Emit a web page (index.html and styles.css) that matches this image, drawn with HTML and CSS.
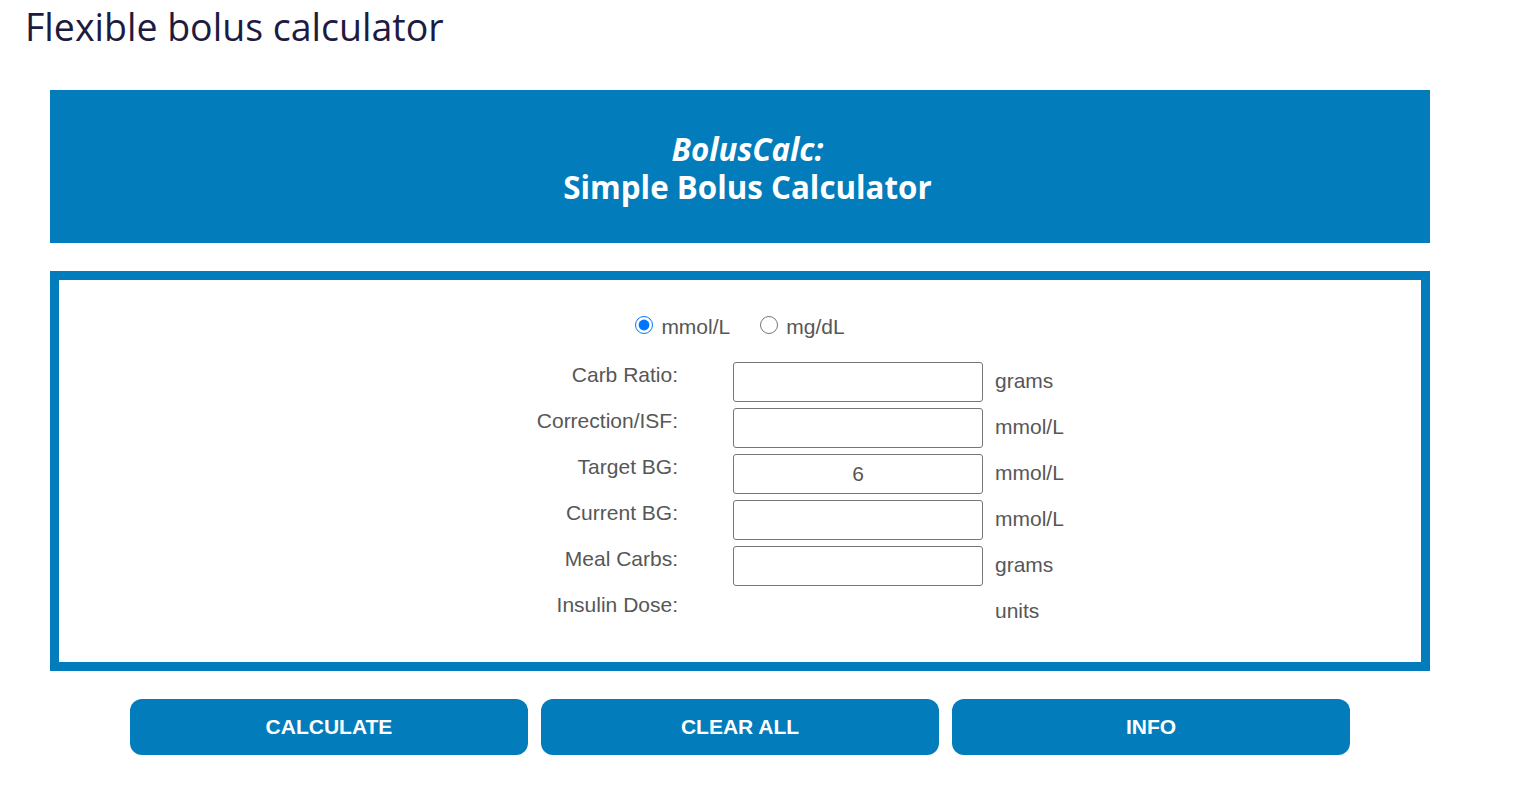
FILE: index.html
```html
<!DOCTYPE html>
<html lang="en">
<head>
<meta charset="utf-8">
<title>Flexible bolus calculator</title>
<link rel="stylesheet" href="styles.css">
</head>
<body>
<h1 class="title">Flexible bolus calculator</h1>
<main class="main">
  <header class="banner">
    <div class="banner-line banner-italic">BolusCalc:</div>
    <div class="banner-line">Simple Bolus Calculator</div>
  </header>
  <section class="panel">
    <div class="units-choice">
      <label class="radio-label"><input class="radio" type="radio" name="unit" checked>mmol/L</label>
      <label class="radio-label"><input class="radio" type="radio" name="unit">mg/dL</label>
    </div>
    <div class="form">
      <div class="lbl">Carb Ratio:</div><input class="field" type="text"><div class="unit">grams</div>
      <div class="lbl">Correction/ISF:</div><input class="field" type="text"><div class="unit">mmol/L</div>
      <div class="lbl">Target BG:</div><input class="field" type="text" value="6"><div class="unit">mmol/L</div>
      <div class="lbl">Current BG:</div><input class="field" type="text"><div class="unit">mmol/L</div>
      <div class="lbl">Meal Carbs:</div><input class="field" type="text"><div class="unit">grams</div>
      <div class="lbl">Insulin Dose:</div><div class="result"></div><div class="unit">units</div>
    </div>
  </section>
  <div class="buttons">
    <button class="btn" type="button">CALCULATE</button>
    <button class="btn" type="button">CLEAR ALL</button>
    <button class="btn" type="button">INFO</button>
  </div>
</main>
</body>
</html>
```
FILE: styles.css
```css
html, body {
  margin: 0;
  padding: 0;
  background: #ffffff;
}
body {
  width: 1536px;
  font-family: "Liberation Sans", Arial, sans-serif;
}
.title {
  margin: 0;
  padding: 2px 0 0 25px;
  height: 90px;
  box-sizing: border-box;
  font-family: "Open Sans", "Noto Sans", sans-serif;
  font-weight: 400;
  font-size: 37.5px;
  line-height: 50px;
  color: #1d1b40;
}
.main {
  width: 1380px;
  margin-left: 50px;
}
.banner {
  height: 153px;
  background: #027cbb;
  color: #ffffff;
  display: flex;
  flex-direction: column;
  justify-content: center;
  align-items: center;
  font-family: "Open Sans", "Noto Sans", sans-serif;
  font-weight: 700;
  font-size: 31.3px;
  line-height: 38px;
  padding: 2px 0 0 15px;
  box-sizing: border-box;
}
.banner-italic {
  font-style: italic;
}
.panel {
  margin-top: 28px;
  height: 400px;
  box-sizing: border-box;
  border: 9px solid #027cbb;
  padding-top: 31px;
  color: #575757;
  font-size: 21px;
}
.units-choice {
  display: flex;
  justify-content: center;
  align-items: center;
  gap: 30px;
  height: 32px;
  margin-bottom: 19px;
}
.radio-label {
  display: flex;
  align-items: center;
  line-height: 24px;
}
.radio {
  width: 18px;
  height: 18px;
  margin: 0 8px 5px 0;
}
.form {
  display: grid;
  grid-template-columns: 273px 305px 92px;
  row-gap: 6px;
  justify-content: center;
}
.lbl {
  text-align: right;
  line-height: 23px;
  padding-top: 1px;
  align-self: start;
}
.field {
  justify-self: end;
  width: 250px;
  height: 40px;
  box-sizing: border-box;
  border: 1px solid #767676;
  border-radius: 3px;
  font-family: "Liberation Sans", Arial, sans-serif;
  font-size: 21px;
  color: #575757;
  text-align: center;
  padding: 0;
  margin: 0;
}
.unit {
  line-height: 23px;
  padding-top: 7px;
  padding-left: 12px;
  align-self: start;
  white-space: nowrap;
}
.result {
  height: 30px;
}
.buttons {
  display: flex;
  justify-content: center;
  gap: 13px;
  margin-top: 28px;
}
.btn {
  width: 398px;
  height: 56px;
  border: none;
  border-radius: 12px;
  background: #027cbb;
  color: #ffffff;
  font-family: "Liberation Sans", Arial, sans-serif;
  font-weight: 700;
  font-size: 21px;
  padding: 0;
}
```
